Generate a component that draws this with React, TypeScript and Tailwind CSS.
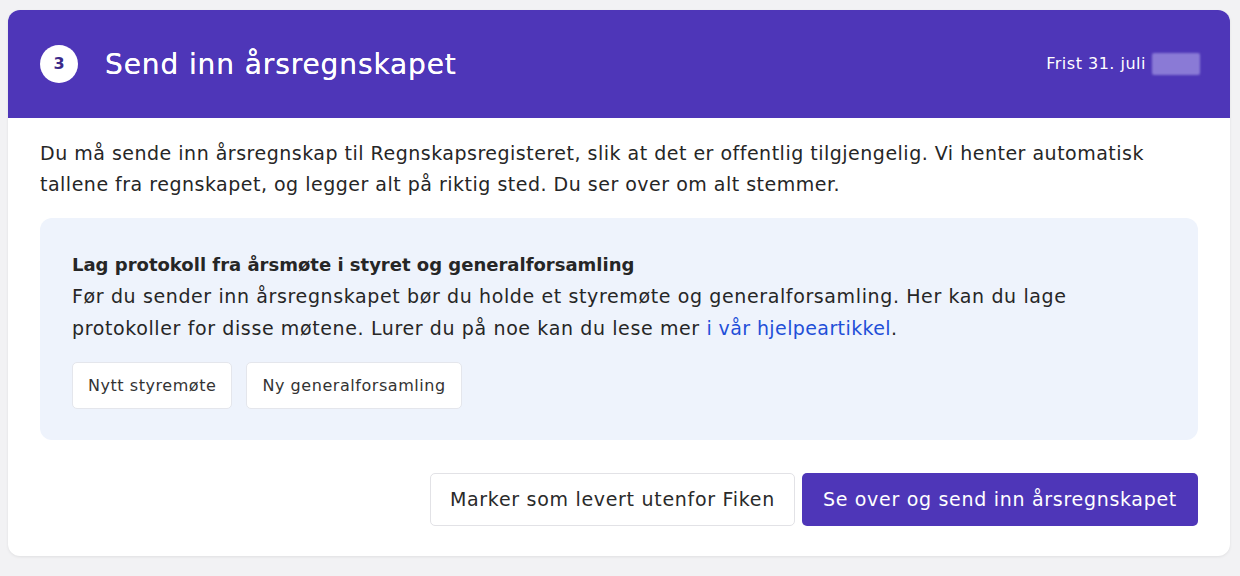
// Annual accounts step card: header, explanation, protocol box, actions.
const font = { fontFamily: '"DejaVu Sans", "Liberation Sans", Arial, sans-serif' }

export default function App() {
  return (
    <div className="min-h-[576px] w-[1240px] bg-[#f2f2f4] pt-[10px] pl-[8px] pr-[10px] pb-[19px]" style={font}>
      <div className="rounded-[12px] bg-white shadow-[0_1px_3px_rgba(0,0,0,0.08)] overflow-hidden">
        {/* Header */}
        <div className="h-[108px] bg-[#4e36b8] flex items-center pl-[32px] pr-[30px]">
          <div className="w-[38px] h-[38px] rounded-full bg-white flex items-center justify-center text-[16px] font-bold text-[#3b2a8a]">
            3
          </div>
          <h2 className="ml-[27px] mt-[2px] text-[28px] tracking-[0.9px] text-white [text-shadow:0_0_0.6px_#fff]">
            Send inn årsregnskapet
          </h2>
          <div className="ml-auto flex items-center gap-[6px] text-white text-[16px] tracking-[0.5px]">
            <span>Frist 31. juli</span>
            <span className="w-[48px] h-[22px] bg-[#8a7ad6] rounded-[2px] blur-[1px]" />
          </div>
        </div>

        {/* Body */}
        <div className="px-[32px] pt-[20px] pb-[30px]">
          <p className="text-[19px] tracking-[0.5px] leading-[31px] text-[#262626]">
            Du må sende inn årsregnskap til Regnskapsregisteret, slik at det er offentlig tilgjengelig. Vi henter automatisk
            <br />
            tallene fra regnskapet, og legger alt på riktig sted. Du ser over om alt stemmer.
          </p>

          <div className="mt-[18px] rounded-[12px] bg-[#eef3fc] pl-[32px] pr-[32px] pt-[32px] pb-[31px]">
            <h3 className="text-[18px] font-bold leading-[30px] text-[#262626]">
              Lag protokoll fra årsmøte i styret og generalforsamling
            </h3>
            <p className="text-[19px] tracking-[0.62px] leading-[32px] text-[#262626]">
              Før du sender inn årsregnskapet bør du holde et styremøte og generalforsamling. Her kan du lage
              <br />
              protokoller for disse møtene. Lurer du på noe kan du lese mer{' '}
              <a className="text-[#1f4fd8] tracking-[0.4px]">i vår hjelpeartikkel</a>.
            </p>
            <div className="mt-[18px] flex gap-[14px]">
              <button className="h-[47px] px-[15px] rounded-[5px] bg-white border border-[#e4e6ec] text-[16px] tracking-[0.55px] text-[#333]">
                Nytt styremøte
              </button>
              <button className="h-[47px] px-[15px] rounded-[5px] bg-white border border-[#e4e6ec] text-[16px] tracking-[0.55px] text-[#333]">
                Ny generalforsamling
              </button>
            </div>
          </div>

          <div className="mt-[33px] flex justify-end gap-[7px]">
            <button className="h-[53px] px-[19px] rounded-[5px] bg-white border border-[#e2e2e6] text-[19px] tracking-[0.7px] text-[#2a2a2a]">
              Marker som levert utenfor Fiken
            </button>
            <button className="h-[53px] px-[21px] rounded-[5px] bg-[#4e36b8] text-[19px] tracking-[0.7px] text-white">
              Se over og send inn årsregnskapet
            </button>
          </div>
        </div>
      </div>
    </div>
  )
}
